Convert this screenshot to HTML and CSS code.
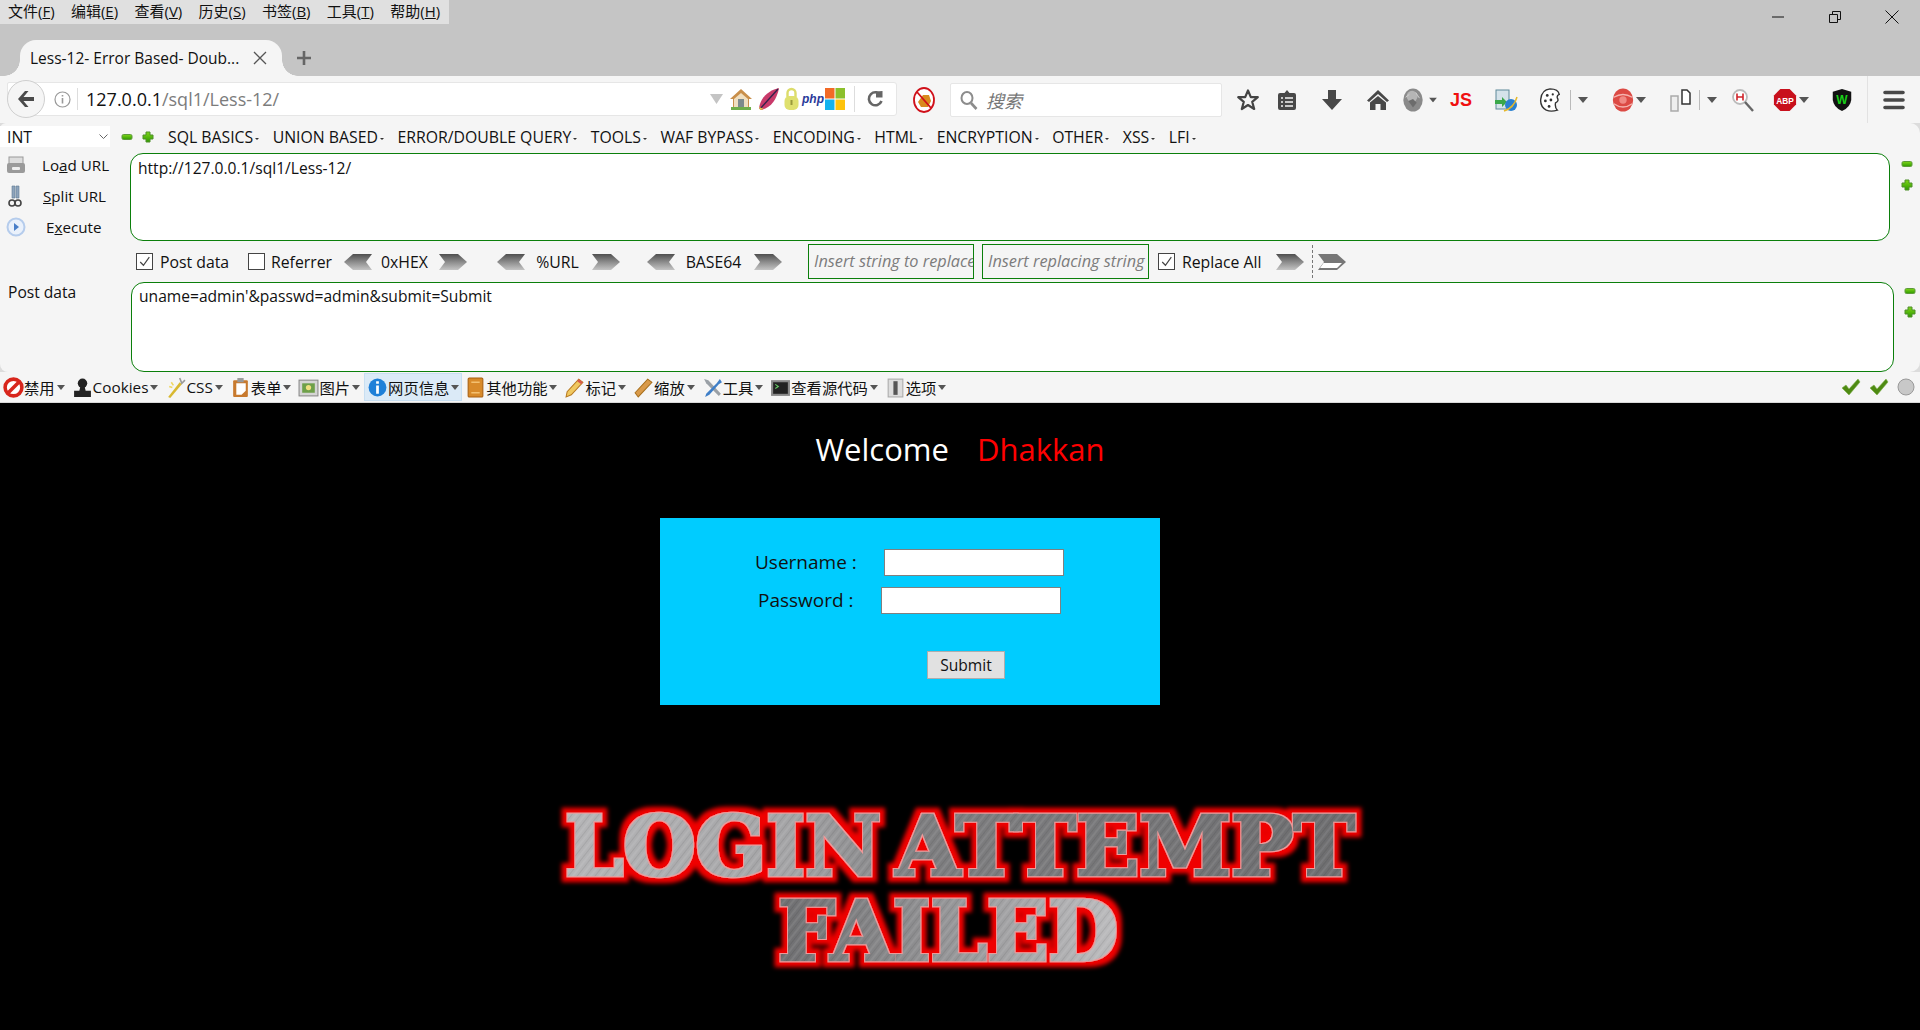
FILE: index.html
```html
<!DOCTYPE html>
<html lang="en">
<head>
    <meta charset="UTF-8">
    <title>Less-12- Error Based- Double Quotes</title>
    <link rel="stylesheet" href="styles.css">
</head>
<body>
    <!-- shared shapes -->
    <svg class="defs" aria-hidden="true">
        <defs>
            <linearGradient id="arrow-grad" x1="0" y1="0" x2="0" y2="1">
                <stop offset="0" stop-color="#4f4f4f"/>
                <stop offset="0.5" stop-color="#8c8c8c"/>
                <stop offset="1" stop-color="#c4c4c4"/>
            </linearGradient>
            <linearGradient id="green-grad" x1="0" y1="0" x2="0" y2="1">
                <stop offset="0" stop-color="#7fd61a"/>
                <stop offset="1" stop-color="#2f9a00"/>
            </linearGradient>
            <symbol id="arrow-left" viewBox="0 0 28 16"><path d="M9 0H28L22 8L28 16H9L0 8Z" fill="url(#arrow-grad)"/></symbol>
            <symbol id="arrow-right" viewBox="0 0 28 16"><path d="M0 0H19L28 8L19 16H0L6 8Z" fill="url(#arrow-grad)"/></symbol>
            <symbol id="minus" viewBox="0 0 12 12"><rect x="1" y="3.5" width="10" height="5" rx="1.5" fill="url(#green-grad)" stroke="#5d9a3a"/></symbol>
            <symbol id="plus" viewBox="0 0 12 12"><path d="M4 1H8V4H11V8H8V11H4V8H1V4H4Z" fill="url(#green-grad)" stroke="#4f8f2a" stroke-linejoin="round"/></symbol>
            <symbol id="caret" viewBox="0 0 10 6"><path d="M0 0H10L5 6Z" fill="#555"/></symbol>
            <symbol id="check" viewBox="0 0 20 18"><path d="M1 10L5 7L8 11L17 1L19 4L8 17Z" fill="#4e8a12" stroke="#7cae4a" stroke-width=".6"/></symbol>
            <symbol id="tick" viewBox="0 0 14 14"><path d="M3 7.5L6 10.5L11.5 3" fill="none" stroke="#444" stroke-width="1.1"/></symbol>
        </defs>
    </svg>

    <header class="titlebar">
        <nav class="menubar">
            <span>文件(<u>F</u>)</span>
            <span>编辑(<u>E</u>)</span>
            <span>查看(<u>V</u>)</span>
            <span>历史(<u>S</u>)</span>
            <span>书签(<u>B</u>)</span>
            <span>工具(<u>T</u>)</span>
            <span>帮助(<u>H</u>)</span>
        </nav>
        <div class="window-btns">
            <svg width="14" height="14" viewBox="0 0 14 14"><path d="M1 7H13" stroke="#111" stroke-width="1"/></svg>
            <svg width="14" height="14" viewBox="0 0 14 14"><path d="M1.5 4.5H9.5V12.5H1.5ZM4.5 4.5V1.5H12.5V9.5H9.5" fill="none" stroke="#111"/></svg>
            <svg width="14" height="14" viewBox="0 0 14 14"><path d="M0.5 0.5L13.5 13.5M13.5 0.5L0.5 13.5" stroke="#111"/></svg>
        </div>
        <div class="tabstrip">
            <div class="tab">
                <span class="tab-title">Less-12- Error Based- Doub...</span>
                <svg width="14" height="14" viewBox="0 0 14 14"><path d="M1 1L13 13M13 1L1 13" stroke="#555" stroke-width="1.3"/></svg>
            </div>
            <svg class="new-tab" width="16" height="16" viewBox="0 0 16 16"><path d="M8 1V15M1 8H15" stroke="#666" stroke-width="2.6"/></svg>
        </div>
    </header>

    <div class="navbar">
        <div class="urlbar">
            <div class="back-btn">
                <svg width="20" height="18" viewBox="0 0 20 18"><path d="M9 1L2 9L9 17H12.5L7.5 11H18V7H7.5L12.5 1Z" fill="#4a4a4a"/></svg>
            </div>
            <svg class="info-ic" width="17" height="17" viewBox="0 0 17 17"><circle cx="8.5" cy="8.5" r="7.5" fill="none" stroke="#999" stroke-width="1.2"/><path d="M8.5 4V5.6M8.5 7V12.5" stroke="#999" stroke-width="1.6"/></svg>
            <span class="url-text"><b>127.0.0.1</b>/sql1/Less-12/</span>
            <svg class="url-drop" width="13" height="10" viewBox="0 0 13 10"><path d="M0 0H13L6.5 10Z" fill="#c4c4c4"/></svg>
            <svg class="url-ic" width="22" height="24" viewBox="0 0 22 24"><path d="M11 2L0 12H3V21H19V12H22Z" fill="#c98f4a"/><path d="M11 6L4 12V20H18V12Z" fill="#f0dfc0"/><rect x="8" y="12" width="6" height="8" fill="#7d8a8c"/><rect x="1" y="20" width="20" height="3" fill="#6fae4a"/></svg>
            <svg class="url-ic feather" width="22" height="24" viewBox="0 0 22 24"><path d="M21 1C12 3 3 9 1 21L3 23C13 21 19 12 21 1Z" fill="#c83a6a"/><path d="M20 2L2 22" stroke="#33224a" stroke-width="1.4"/><path d="M1 20L6 22L2 23Z" fill="#e6c94a"/></svg>
            <svg class="url-ic lock" width="15" height="24" viewBox="0 0 15 24"><path d="M3.5 10V6A4 4 0 0 1 11.5 6V10" fill="none" stroke="#dcdc6a" stroke-width="2.4"/><rect x="0.5" y="9" width="14" height="14" rx="5" fill="#dfe06e"/><rect x="6.5" y="13" width="2" height="5" fill="#9a9a3c"/></svg>
            <span class="php-ic">php</span>
            <svg class="url-ic win" width="20" height="24" viewBox="0 0 20 24"><rect y="1" width="9.5" height="10.5" fill="#f26a26"/><rect x="10.5" y="1" width="9.5" height="10.5" fill="#8cc02c"/><rect y="12.5" width="9.5" height="10.5" fill="#12b2ee"/><rect x="10.5" y="12.5" width="9.5" height="10.5" fill="#fdc30c"/></svg>
            <span class="url-sep"></span>
            <svg class="reload" width="16" height="18" viewBox="0 0 16 18"><path d="M14 5.5A6.5 6.5 0 1 0 14.500 11" fill="none" stroke="#666" stroke-width="2.6"/><path d="M9 1.500L15.500 1V7.500H9Z" fill="#666"/></svg>
        </div>
        <svg class="noscript" width="22" height="26" viewBox="0 0 22 26"><ellipse cx="11" cy="13" rx="10" ry="12" fill="#fff" stroke="#d0101a" stroke-width="1.8"/><path d="M5 15L10 8H16L18 14L15 20H8Z" fill="#d98a1e"/><path d="M4 5L18 21" stroke="#d0101a" stroke-width="1.8"/></svg>
        <div class="searchbar">
            <svg width="18" height="20" viewBox="0 0 18 20"><ellipse cx="7" cy="8" rx="5.500" ry="6" fill="none" stroke="#8c8c8c" stroke-width="2"/><path d="M11 13L16.500 19" stroke="#8c8c8c" stroke-width="2.600"/></svg>
            <span>搜索</span>
        </div>
        <div class="nav-icons">
            <svg class="ic star" viewBox="0 0 24 24"><path d="M12 2.500L14.800 9.200H21.800L16.200 13.800L18.200 21L12 17L5.800 21L7.800 13.800L2.200 9.200H9.200Z" fill="none" stroke="#444" stroke-width="2.200" stroke-linejoin="round"/></svg>
            <svg class="ic clip" viewBox="0 0 24 24"><path d="M5 5H9.500L12 2L14.500 5H19Q21 5 21 7V20Q21 22 19 22H5Q3 22 3 20V7Q3 5 5 5Z" fill="#484848"/><path d="M6 10H8M10 10H18M6 14H8M10 14H18M6 18H8M10 18H18" stroke="#f5f5f5" stroke-width="1.500"/></svg>
            <svg class="ic down" viewBox="0 0 24 24"><path d="M8 2H16V11H22L12 22L2 11H8Z" fill="#484848"/></svg>
            <svg class="ic home" viewBox="0 0 24 24"><path d="M12 2L1 12.500L3 14L12 6L21 14L23 12.500Z" fill="#484848"/><path d="M4 14.500L12 8L20 14.500V22H14.500V16H9.500V22H4Z" fill="#484848"/></svg>
            <svg class="ic globe" viewBox="0 0 24 26"><ellipse cx="12" cy="13" rx="10.500" ry="12.500" fill="#8a8a8a"/><ellipse cx="11" cy="9" rx="6" ry="6" fill="#b5b5b5"/><path d="M7 14L12 12L16 16L12 21Z" fill="#6c6c6c"/><path d="M4 10L8 7M15 5L19 11" stroke="#d0d0d0"/></svg>
            <svg class="caret c-globe" viewBox="0 0 10 6"><use href="#caret"/></svg>
            <span class="ic js-ic">JS</span>
            <svg class="ic ie" viewBox="0 0 24 24"><rect x="2" y="2" width="13" height="19" fill="#d5e3ea" stroke="#5f8a9a"/><path d="M1 12H8V9L13 14L8 19V16H1Z" fill="#3aa84a"/><circle cx="17" cy="17" r="6" fill="#2a80d0"/><path d="M10 23Q20 20 23 9" fill="none" stroke="#e6b82a" stroke-width="1.500"/></svg>
            <svg class="ic cookie" viewBox="0 0 24 26"><path d="M12 1Q21 1 22 7Q19 8 20 11Q22 14 18 16Q17 21 20 24Q13 26 8 24Q1 20 2 12Q3 2 12 1Z" fill="#fff" stroke="#333" stroke-width="1.500"/><circle cx="9" cy="8" r="1.500" fill="#333"/><circle cx="15" cy="7" r="1.200" fill="#333"/><circle cx="7" cy="14" r="1.500" fill="#333"/><circle cx="13" cy="13" r="1.500" fill="#333"/><circle cx="11" cy="20" r="1.500" fill="#333"/></svg>
            <span class="vsep s-cookie"></span>
            <svg class="caret c-cookie" viewBox="0 0 10 6"><use href="#caret"/></svg>
            <svg class="ic redcirc" viewBox="0 0 24 26"><ellipse cx="12" cy="13" rx="11" ry="12.500" fill="#dc4a44"/><path d="M2 10Q12 4 22 10M2 17Q12 24 22 17" fill="none" stroke="#f5b5b0" stroke-width="1.500"/><circle cx="12" cy="13" r="4" fill="#f08a84"/></svg>
            <svg class="caret c-red" viewBox="0 0 10 6"><use href="#caret"/></svg>
            <svg class="ic tabs" viewBox="0 0 24 24"><rect x="3" y="8" width="7" height="15" fill="#eee" stroke="#aaa" stroke-width="1.500"/><path d="M14 2H19L22 5V16H14Z" fill="#fff" stroke="#333" stroke-width="1.500"/></svg>
            <span class="vsep s-tabs"></span>
            <svg class="caret c-tabs" viewBox="0 0 10 6"><use href="#caret"/></svg>
            <svg class="ic lens" viewBox="0 0 24 24"><circle cx="9" cy="9" r="7" fill="#fff" stroke="#bbb" stroke-width="1.800"/><path d="M6 5.500V12.500M12 5.500V12.500M6 9H12" stroke="#d0232a" stroke-width="1.600"/><path d="M14 14L22 23" stroke="#666" stroke-width="2.400"/></svg>
            <svg class="ic abp" viewBox="0 0 24 26"><path d="M7 1H17L24 8V18L17 25H7L0 18V8Z" fill="#c8101c"/><text x="12" y="17" text-anchor="middle" class="abp-text">ABP</text></svg>
            <svg class="caret c-abp" viewBox="0 0 10 6"><use href="#caret"/></svg>
            <svg class="ic shield" viewBox="0 0 24 26"><path d="M12 1L22 4V13Q21 21 12 25Q3 21 2 13V4Z" fill="#111"/><text x="12" y="17" text-anchor="middle" class="shield-text">W</text></svg>
            <span class="vsep tall"></span>
            <svg class="ic burger" viewBox="0 0 24 24"><path d="M3 4.500H21M3 12H21M3 19.500H21" stroke="#484848" stroke-width="3.600" stroke-linecap="round"/></svg>
        </div>
    </div>

    <div class="hack-wrap">
    <section class="hackbar">
        <div class="hack-menu">
            <div class="int-select">INT<svg width="9" height="6" viewBox="0 0 9 6"><path d="M.5 .5L4.500 4.500L8.500 .5" fill="none" stroke="#666"/></svg></div>
            <svg class="hack-minus" width="12" height="12"><use href="#minus"/></svg>
            <svg class="hack-plus" width="12" height="12"><use href="#plus"/></svg>
            <span class="mi m1">SQL BASICS</span>
            <span class="mi">UNION BASED</span>
            <span class="mi">ERROR/DOUBLE QUERY</span>
            <span class="mi">TOOLS</span>
            <span class="mi">WAF BYPASS</span>
            <span class="mi">ENCODING</span>
            <span class="mi">HTML</span>
            <span class="mi">ENCRYPTION</span>
            <span class="mi">OTHER</span>
            <span class="mi">XSS</span>
            <span class="mi">LFI</span>
        </div>

        <div class="hack-url">
            <div class="hack-actions">
                <div class="action">
                    <svg width="20" height="18" viewBox="0 0 20 18"><rect x="3" y="1" width="14" height="8" fill="#ddd" stroke="#999"/><rect x="1" y="7" width="18" height="10" rx="2" fill="#9a9a9a"/><rect x="6" y="11" width="8" height="3" rx="1" fill="#eee"/></svg>
                    <span class="a-load">Lo<u>a</u>d URL</span>
                </div>
                <div class="action">
                    <svg width="20" height="22" viewBox="0 0 20 22"><path d="M6 1V13H9V1ZM10 1V13H13V1Z" fill="#8ea4bc" stroke="#5f7890" stroke-width=".6"/><circle cx="6" cy="18" r="3" fill="none" stroke="#444" stroke-width="1.600"/><circle cx="12" cy="18" r="3" fill="none" stroke="#444" stroke-width="1.600"/></svg>
                    <span class="a-split"><u>S</u>plit URL</span>
                </div>
                <div class="action">
                    <svg width="20" height="20" viewBox="0 0 20 20"><circle cx="10" cy="10" r="8.500" fill="#eaf1fb" stroke="#b5ccec" stroke-width="2"/><path d="M8 6L13 10L8 14Z" fill="#4a7fc8"/></svg>
                    <span class="a-exec">E<u>x</u>ecute</span>
                </div>
            </div>
            <div class="hack-box url-box">http://127.0.0.1/sql1/Less-12/</div>
            <div class="side-btns">
                <svg width="12" height="12"><use href="#minus"/></svg>
                <svg width="12" height="12"><use href="#plus"/></svg>
            </div>
        </div>

        <div class="hack-opts">
            <span class="chk"><svg viewBox="0 0 14 14"><use href="#tick"/></svg></span>
            <span class="o-post">Post data</span>
            <span class="chk c-ref"></span>
            <span class="o-ref">Referrer</span>
            <svg class="arr a-hex"><use href="#arrow-left"/></svg>
            <span class="o-enc e-hex">0xHEX</span>
            <svg class="arr"><use href="#arrow-right"/></svg>
            <svg class="arr a-url"><use href="#arrow-left"/></svg>
            <span class="o-enc e-url">%URL</span>
            <svg class="arr"><use href="#arrow-right"/></svg>
            <svg class="arr a-b64"><use href="#arrow-left"/></svg>
            <span class="o-enc e-b64">BASE64</span>
            <svg class="arr"><use href="#arrow-right"/></svg>
            <span class="rep r-find">Insert string to replace</span>
            <span class="rep r-with">Insert replacing string</span>
            <span class="chk c-all"><svg viewBox="0 0 14 14"><use href="#tick"/></svg></span>
            <span class="o-all">Replace All</span>
            <svg class="arr a-rep"><use href="#arrow-right"/></svg>
            <span class="dotted"></span>
            <svg class="arr a-white" viewBox="0 0 28 16"><path d="M0 0H19L28 8L19 16H0L6 8Z" fill="#777"/><path d="M4 9H24L19 14H2L5.500 9Z" fill="#fff"/></svg>
        </div>

        <div class="hack-post">
            <div class="post-label">Post data</div>
            <div class="hack-box post-box">uname=admin'&amp;passwd=admin&amp;submit=Submit</div>
            <div class="side-btns s2">
                <svg width="12" height="12"><use href="#minus"/></svg>
                <svg width="12" height="12"><use href="#plus"/></svg>
            </div>
        </div>
    </section>
    </div>

    <div class="devbar">
        <span class="dev"><svg viewBox="0 0 20 20"><circle cx="10" cy="10" r="8" fill="#fff" stroke="#d8261c" stroke-width="3.400"/><path d="M5 15L15 5" stroke="#d8261c" stroke-width="3.400"/></svg>禁用<i></i></span>
        <span class="dev"><svg viewBox="0 0 20 20"><circle cx="10" cy="6" r="4.500" fill="#222"/><path d="M8 9H12L13 13H18V19H2V13H7Z" fill="#222"/></svg>Cookies<i></i></span>
        <span class="dev"><svg viewBox="0 0 20 20"><path d="M3 19L14 5L16 7L5 20Z" fill="#d8b830"/><path d="M14 1L16 6L19 3" fill="none" stroke="#999" stroke-width="1.500"/><path d="M6 5L8 8M4 9L7 10" stroke="#f0d860" stroke-width="1.500"/></svg>CSS<i></i></span>
        <span class="dev"><svg viewBox="0 0 20 20"><rect x="3" y="3" width="14" height="16" rx="1" fill="#c87a2e"/><path d="M6 6H15V13L11 17H6Z" fill="#fff"/><rect x="7" y="1" width="6" height="4" fill="#999"/></svg>表单<i></i></span>
        <span class="dev"><svg viewBox="0 0 20 20"><rect x="1" y="3" width="18" height="15" fill="#d5d5d5" stroke="#888"/><rect x="4" y="6" width="12" height="9" fill="#6ea04a"/><circle cx="10" cy="10" r="2.500" fill="#f0e080"/></svg>图片<i></i></span>
        <span class="dev active"><svg viewBox="0 0 20 20"><circle cx="10" cy="10" r="8.500" fill="#1f80d8"/><path d="M10 4V6.500M10 8V16" stroke="#fff" stroke-width="2.600"/></svg>网页信息<i></i></span>
        <span class="dev"><svg viewBox="0 0 20 20"><rect x="3" y="1" width="14" height="18" rx="1" fill="#d88a2a" stroke="#a85f10"/><path d="M6 5H14M6 15H14" stroke="#f4c070" stroke-width="1.500"/></svg>其他功能<i></i></span>
        <span class="dev"><svg viewBox="0 0 20 20"><path d="M2 19L3 14L14 2L18 5L7 17Z" fill="#f0c860" stroke="#b87a20"/><path d="M14 2L18 5L16.500 7L12.500 4Z" fill="#d85a4a"/></svg>标记<i></i></span>
        <span class="dev"><svg viewBox="0 0 20 20"><path d="M2 15L14 2L18 5L5 19Z" fill="#d99a4a" stroke="#a8701e"/></svg>缩放<i></i></span>
        <span class="dev"><svg viewBox="0 0 20 20"><path d="M2 2L6 3L18 16L16 18L4 6Z" fill="#9aa0a6"/><path d="M17 2L14 6L4 16L3 19L7 17L16 7L19 5Z" fill="#3f7fc8"/></svg>工具<i></i></span>
        <span class="dev"><svg viewBox="0 0 20 20"><rect x="1" y="3" width="18" height="15" fill="#888"/><rect x="3" y="5" width="14" height="11" fill="#222"/><path d="M5 7L8 9L5 11" fill="none" stroke="#6c6" stroke-width="1"/></svg>查看源代码<i></i></span>
        <span class="dev"><svg viewBox="0 0 20 20"><rect x="3" y="2" width="14" height="17" fill="#ddd" stroke="#aaa"/><rect x="8" y="4" width="4" height="13" fill="#555"/></svg>选项<i></i></span>
        <div class="dev-status">
            <svg width="20" height="18"><use href="#check"/></svg>
            <svg width="20" height="18"><use href="#check"/></svg>
            <svg width="18" height="18" viewBox="0 0 18 18"><circle cx="9" cy="9" r="8" fill="#c8c8c8" stroke="#999"/></svg>
        </div>
    </div>

    <main class="page">
        <div class="welcome">Welcome <span class="dhakkan">Dhakkan</span></div>
        <form class="login-box" onsubmit="return false">
            <div class="row row-user">
                <label>Username :</label>
                <input type="text">
            </div>
            <div class="row row-pass">
                <label>Password :</label>
                <input type="password">
            </div>
            <button type="submit">Submit</button>
        </form>
        <svg class="failed" viewBox="0 0 840 200" width="840" height="200">
            <defs>
                <linearGradient id="shade" gradientUnits="userSpaceOnUse" x1="0" y1="0" x2="840" y2="0">
                    <stop offset="0.03" stop-color="#b5b5b7"/>
                    <stop offset="0.30" stop-color="#a4a4a6"/>
                    <stop offset="0.45" stop-color="#7e7e80"/>
                    <stop offset="0.95" stop-color="#6e6e70"/>
                </linearGradient>
                <linearGradient id="shade2" gradientUnits="userSpaceOnUse" x1="238" y1="0" x2="578" y2="0">
                    <stop offset="0" stop-color="#6e6e70"/>
                    <stop offset="1" stop-color="#bcbcbe"/>
                </linearGradient>
                <pattern id="brush" patternUnits="userSpaceOnUse" width="7" height="7" patternTransform="rotate(-52)">
                    <rect width="7" height="2" fill="#fff" opacity=".08"/>
                    <rect y="4" width="7" height="1" fill="#000" opacity=".08"/>
                </pattern>
                <pattern id="metal1" patternUnits="userSpaceOnUse" width="840" height="200">
                    <rect width="840" height="200" fill="url(#shade)"/>
                    <rect width="840" height="200" fill="url(#brush)"/>
                </pattern>
                <pattern id="metal2" patternUnits="userSpaceOnUse" width="840" height="200">
                    <rect width="840" height="200" fill="url(#shade2)"/>
                    <rect width="840" height="200" fill="url(#brush)"/>
                </pattern>
                <filter id="red-glow" x="-5%" y="-30%" width="110%" height="160%">
                    <feMorphology in="SourceAlpha" operator="dilate" radius="6" result="fat"/>
                    <feGaussianBlur in="fat" stdDeviation="2" result="soft"/>
                    <feFlood flood-color="#f00000"/>
                    <feComposite in2="soft" operator="in" result="glow"/>
                    <feMorphology in="SourceAlpha" operator="dilate" radius="1" result="thin"/>
                    <feFlood flood-color="#e8e8e8" flood-opacity=".4"/>
                    <feComposite in2="thin" operator="in" result="rim"/>
                    <feMerge>
                        <feMergeNode in="glow"/>
                        <feMergeNode in="rim"/>
                        <feMergeNode in="SourceGraphic"/>
                    </feMerge>
                </filter>
            </defs>
            <text class="failed-text" x="25" y="95" textLength="790" lengthAdjust="spacingAndGlyphs" fill="url(#metal1)" stroke="url(#metal1)" filter="url(#red-glow)">LOGIN ATTEMPT</text>
            <text class="failed-text" x="238" y="180" textLength="340" lengthAdjust="spacingAndGlyphs" fill="url(#metal2)" stroke="url(#metal2)" filter="url(#red-glow)">FAILED</text>
        </svg>
    </main>
</body>
</html>
```

FILE: styles.css
```css
/* Basic reset */
* {
    box-sizing: border-box;
    margin: 0;
    padding: 0;
}

html, body {
    height: 1030px;
    overflow: hidden;
}

body {
    background-color: #000;
    font-family: "Open Sans", "Noto Sans CJK SC", sans-serif;
    font-size: 15.200px;
    color: #111;
}

.defs {
    display: block;
    width: 0;
    height: 0;
}

/* Title bar and tabs */
.titlebar {
    position: relative;
    height: 76px;
    background-color: #c5c5c5;
}

.menubar {
    display: flex;
    width: 449px;
    height: 24px;
    padding: 0 0 3px 8px;
    gap: 16.300px;
    align-items: center;
    background-color: #e0e0e0;
    font-size: 15px;
    white-space: nowrap;
}

.window-btns {
    position: absolute;
    top: 10px;
    right: 21px;
    display: flex;
    gap: 43px;
}

.tabstrip {
    display: flex;
    align-items: center;
    height: 36px;
    margin-top: 16px;
    padding-left: 20px;
}

.tab {
    position: relative;
    display: flex;
    align-items: center;
    width: 262px;
    height: 36px;
    padding-left: 10px;
    background-color: #f5f5f5;
    border-radius: 16px 16px 0 0;
    font-size: 15.500px;
}

.tab::before,
.tab::after {
    content: "";
    position: absolute;
    bottom: 0;
    width: 16px;
    height: 16px;
}

.tab::before {
    left: -16px;
    background: radial-gradient(circle at 0 0, transparent 15.500px, #f5f5f5 16px);
}

.tab::after {
    right: -16px;
    background: radial-gradient(circle at 100% 0, transparent 15.500px, #f5f5f5 16px);
}

.tab-title {
    width: 223px;
    white-space: nowrap;
}

.new-tab {
    margin-left: 14px;
}

/* Navigation toolbar */
.navbar {
    display: flex;
    align-items: center;
    height: 47px;
    padding-left: 7px;
    background-color: #f5f5f5;
}

.urlbar {
    display: flex;
    align-items: center;
    width: 890px;
    height: 34px;
    background-color: #fff;
    border: 1px solid #e6e6e6;
    border-radius: 2px 3px 3px 19px;
    margin-top: -1px;
}

.back-btn {
    display: flex;
    align-items: center;
    justify-content: center;
    width: 38px;
    height: 38px;
    margin: -2px 0 -2px -1px;
    flex-shrink: 0;
    background-color: #f5f5f5;
    border: 1px solid #cfcfcf;
    border-radius: 50%;
}

.info-ic {
    margin-left: 9px;
}

.url-text {
    width: 647px;
    height: 22px;
    margin-left: 6px;
    padding-left: 8px;
    border-left: 1px solid #ddd;
    font-size: 18px;
    line-height: 22px;
    color: #7c7c7c;
    white-space: nowrap;
}

.url-text b {
    font-weight: 400;
    color: #111;
}

.url-drop {
    margin-left: -14px;
}

.url-ic {
    margin-left: 7px;
}

.feather {
    margin-left: 6px;
}

.lock {
    margin-left: 4px;
}

.php-ic {
    margin-left: 3px;
    font-family: "Liberation Sans", sans-serif;
    font-size: 12px;
    font-weight: 700;
    font-style: italic;
    color: #2a3a9a;
}

.win {
    margin-left: 1px;
}

.url-sep {
    width: 1px;
    height: 26px;
    margin-left: 9px;
    background-color: #ddd;
}

.reload {
    margin-left: 12px;
}

.noscript {
    margin-left: 16px;
}

.searchbar {
    display: flex;
    align-items: center;
    width: 272px;
    height: 34px;
    margin-left: 15px;
    padding-left: 9px;
    gap: 8px;
    background-color: #fff;
    border: 1px solid #e6e6e6;
    border-radius: 2px;
    font-size: 18px;
    font-style: italic;
    color: #777;
}

.nav-icons {
    display: flex;
    align-items: center;
    height: 47px;
}

.ic {
    width: 24px;
    height: 24px;
    flex-shrink: 0;
}

.caret {
    width: 10px;
    height: 6px;
    flex-shrink: 0;
}

.vsep {
    width: 1px;
    height: 20px;
    flex-shrink: 0;
    background-color: #bbb;
}

.tall {
    height: 47px;
    margin-left: 13px;
    background-color: #e2e2e2;
}

.star { margin-left: 14px; }
.clip { margin-left: 15px; }
.down { margin-left: 21px; }
.home { margin-left: 22px; }
.globe { margin-left: 11px; }
.c-globe { width: 8px; margin-left: 4px; }
.js-ic {
    margin-left: 12px;
    font-family: "Liberation Sans", sans-serif;
    font-size: 18px;
    font-weight: 700;
    line-height: 24px;
    text-align: center;
    color: #f01010;
}
.ie { margin-left: 21px; }
.cookie { margin-left: 20px; }
.s-cookie { margin-left: 8px; }
.c-cookie { margin-left: 7px; }
.redcirc { margin-left: 23px; }
.c-red { margin-left: 1px; }
.tabs { margin-left: 22px; }
.s-tabs { margin-left: 7px; }
.c-tabs { margin-left: 7px; }
.lens { margin-left: 14px; }
.abp { margin-left: 18px; }
.c-abp { margin-left: 2px; }
.shield { margin-left: 21px; }
.burger { margin-left: 14px; }

.abp-text {
    font-family: "Liberation Sans", sans-serif;
    font-size: 9px;
    font-weight: 700;
    fill: #fff;
}

.shield-text {
    font-family: "Liberation Sans", sans-serif;
    font-size: 13px;
    font-weight: 700;
    fill: #18d018;
}

/* Hackbar */
.hack-wrap {
    background-color: #dcdcdc;
}

.hackbar {
    height: 249px;
    background-color: #f5f5f5;
    border-radius: 6px 10px 10px 8px;
}

.hack-menu {
    display: flex;
    align-items: center;
    height: 27px;
    font-size: 15.800px;
    white-space: nowrap;
}

.int-select {
    display: flex;
    align-items: center;
    justify-content: space-between;
    width: 110px;
    height: 21px;
    padding: 0 2px 0 7px;
    background-color: #fff;
}

.hack-minus {
    margin-left: 11px;
}

.hack-plus {
    margin-left: 9px;
}

.mi {
    margin-left: 13.500px;
}

.mi::after {
    content: "";
    display: inline-block;
    margin-left: 2px;
    vertical-align: 3px;
    border: 2.500px solid transparent;
    border-top-color: #333;
    border-bottom-width: 0;
}

.m1 {
    margin-left: 14px;
}

.hack-url {
    display: flex;
    height: 91px;
    padding-top: 3px;
}

.hack-actions {
    width: 130px;
    flex-shrink: 0;
    margin-top: -4px;
}

.action {
    display: flex;
    align-items: center;
    height: 31px;
    padding-left: 6px;
}

.action span {
    white-space: nowrap;
}

.a-load { margin-left: 16px; }
.a-split { margin-left: 17px; }
.a-exec { margin-left: 20px; }

.hack-box {
    background-color: #fff;
    border: 1px solid #0b7f0b;
    border-radius: 13px;
    padding: 3px 7px;
    font-size: 15.600px;
    line-height: 20px;
}

.url-box {
    width: 1760px;
    height: 88px;
    padding-top: 4px;
}

.side-btns {
    display: flex;
    flex-direction: column;
    gap: 9px;
    margin: 5px 0 0 11px;
}

.hack-opts {
    display: flex;
    align-items: center;
    height: 41px;
    padding-left: 136px;
    font-size: 15.800px;
    white-space: nowrap;
}

.chk {
    display: block;
    width: 17px;
    height: 17px;
    flex-shrink: 0;
    background-color: #fff;
    border: 1px solid #444;
}

.chk svg {
    display: block;
    width: 15px;
    height: 15px;
}

.o-post { margin-left: 7px; width: 69px; }
.c-ref { margin-left: 19px; }
.o-ref { margin-left: 6px; width: 58px; }

.arr {
    width: 28px;
    height: 16px;
    flex-shrink: 0;
}

.a-hex { margin-left: 15px; }
.a-url { margin-left: 30px; }
.a-b64 { margin-left: 27px; }
.e-hex { width: 67px; }
.e-url { width: 67px; }
.e-b64 { width: 79px; }

.o-enc {
    text-align: center;
    padding-right: 2px;
}

.rep {
    height: 35px;
    overflow: hidden;
    padding: 0 5px;
    background-color: transparent;
    border: 1px solid #0b7f0b;
    font-size: 16.300px;
    font-style: italic;
    line-height: 33px;
    color: #7c7c7c;
}

.r-find { width: 166px; margin-left: 26px; }
.r-with { width: 167px; margin-left: 8px; }
.c-all { margin-left: 9px; }
.o-all { margin-left: 7px; width: 80px; }
.a-rep { margin-left: 14px; }

.dotted {
    height: 33px;
    margin-left: 8px;
    border-left: 1px dashed #777;
}

.a-white { margin-left: 5px; }

.hack-post {
    display: flex;
    height: 90px;
}

.post-label {
    width: 131px;
    padding: 0 0 0 8px;
    flex-shrink: 0;
    font-size: 15.600px;
    line-height: 20px;
}

.post-box {
    width: 1763px;
    height: 90px;
}

.s2 {
    margin: 3px 0 0 10px;
}

/* Developer toolbar */
.devbar {
    display: flex;
    align-items: center;
    height: 31px;
    padding: 0 5px 0 3px;
    background-color: #f5f5f5;
    border-bottom: 1px solid #d8d8d8;
    font-size: 15.300px;
    white-space: nowrap;
}

.dev {
    display: flex;
    align-items: center;
    height: 28px;
    margin-right: 7px;
}

.dev svg {
    width: 21px;
    height: 21px;
    flex-shrink: 0;
}

.dev i {
    margin-left: 2px;
    border: 4px solid transparent;
    border-top: 5px solid #555;
    border-bottom-width: 0;
}

.active {
    padding: 0 2px;
    margin: 0 3px 0 -3px;
    background-color: #dbeaf7;
    border: 1px solid #c8dff2;
}

.dev-status {
    display: flex;
    align-items: center;
    gap: 8px;
    margin-left: auto;
}

/* Page content */
.page {
    height: 627px;
    background-color: #000;
    overflow: hidden;
}

.welcome {
    padding-top: 26px;
    height: 115px;
    font-size: 31px;
    line-height: 40px;
    text-align: center;
    word-spacing: 20px;
    color: #fff;
}

.dhakkan {
    color: #f00;
}

.login-box {
    width: 500px;
    height: 187px;
    margin-left: 660px;
    padding-top: 31px;
    background-color: #00ccff;
}

.row {
    display: flex;
    align-items: center;
    height: 27px;
    font-size: 19px;
}

.row label {
    padding-bottom: 2px;
}

.row input {
    width: 180px;
    height: 27px;
    background-color: #fff;
    border: 1px solid #808080;
    outline: none;
}

.row-user {
    padding-left: 95px;
}

.row-user label {
    width: 129px;
}

.row-pass {
    margin-top: 11px;
    padding-left: 98px;
}

.row-pass label {
    width: 123px;
}

.login-box button {
    display: block;
    width: 78px;
    height: 28px;
    margin: 37px 0 0 267px;
    background-color: #e1e1e1;
    border: 1px solid #adadad;
    font-family: "Open Sans", sans-serif;
    font-size: 15.600px;
    color: #111;
}

.failed {
    display: block;
    margin: 75px 0 0 540px;
}

.failed-text {
    font-family: "DejaVu Serif", serif;
    font-size: 82px;
    font-weight: 700;
    word-spacing: -14px;
    stroke-width: 2.500px;
}
```
